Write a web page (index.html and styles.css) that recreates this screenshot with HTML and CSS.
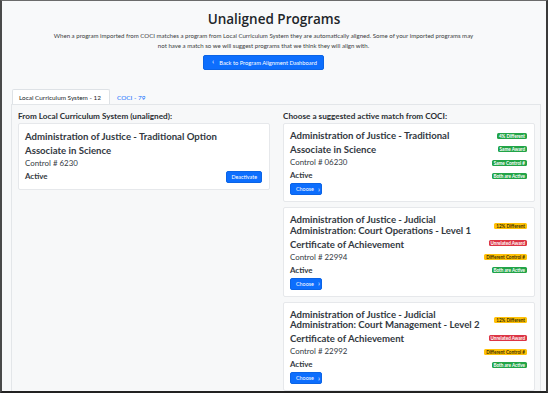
FILE: index.html
```html
<!DOCTYPE html>
<html lang="en">
<head>
<meta charset="utf-8">
<title>Unaligned Programs</title>
<link rel="stylesheet" href="styles.css">
</head>
<body>
<div class="frame">
  <header class="intro">
    <h1 class="page-title">Unaligned Programs</h1>
    <div class="intro-body">
      <p class="lead">When a program imported from COCI matches a program from Local Curriculum System they are automatically aligned. Some of your imported programs may not have a match so we will suggest programs that we think they will align with.</p>
      <a class="btn btn-primary btn-back" href="#"><span class="chev">&#8249;</span>Back to Program Alignment Dashboard</a>
    </div>
  </header>

  <nav class="tabs">
    <a class="tab active" href="#">Local Curriculum System - 12</a>
    <a class="tab" href="#">COCI - 79</a>
  </nav>

  <section class="panel">
    <div class="col">
      <h2 class="col-title">From Local Curriculum System (unaligned):</h2>
      <div class="card card-local">
        <div class="row"><div class="prog-title">Administration of Justice - Traditional Option</div></div>
        <div class="row"><div class="award">Associate in Science</div></div>
        <div class="row"><div class="control">Control # 6230</div></div>
        <div class="row"><div class="status">Active</div><a class="btn btn-primary btn-xs" href="#">Deactivate</a></div>
      </div>
    </div>

    <div class="col">
      <h2 class="col-title">Choose a suggested active match from COCI:</h2>

      <div class="card">
        <div class="row"><div class="prog-title">Administration of Justice - Traditional</div><span class="badge green">4% Different</span></div>
        <div class="row"><div class="award">Associate in Science</div><span class="badge green">Same Award</span></div>
        <div class="row"><div class="control">Control # 06230</div><span class="badge green">Same Control #</span></div>
        <div class="row"><div class="status">Active</div><span class="badge green">Both are Active</span></div>
        <a class="btn btn-primary btn-choose" href="#">Choose<span class="chev-r">&#8250;</span></a>
      </div>

      <div class="card">
        <div class="row"><div class="prog-title">Administration of Justice - Judicial Administration: Court Operations - Level 1</div><span class="badge yellow">12% Different</span></div>
        <div class="row"><div class="award">Certificate of Achievement</div><span class="badge red">Unrelated Award</span></div>
        <div class="row"><div class="control">Control # 22994</div><span class="badge yellow">Different Control #</span></div>
        <div class="row"><div class="status">Active</div><span class="badge green">Both are Active</span></div>
        <a class="btn btn-primary btn-choose" href="#">Choose<span class="chev-r">&#8250;</span></a>
      </div>

      <div class="card">
        <div class="row"><div class="prog-title">Administration of Justice - Judicial Administration: Court Management - Level 2</div><span class="badge yellow">12% Different</span></div>
        <div class="row"><div class="award">Certificate of Achievement</div><span class="badge red">Unrelated Award</span></div>
        <div class="row"><div class="control">Control # 22992</div><span class="badge yellow">Different Control #</span></div>
        <div class="row"><div class="status">Active</div><span class="badge green">Both are Active</span></div>
        <a class="btn btn-primary btn-choose" href="#">Choose<span class="chev-r">&#8250;</span></a>
      </div>
    </div>
  </section>
</div>
</body>
</html>
```
FILE: styles.css
```css
* { box-sizing: border-box; }
html, body { margin: 0; padding: 0; }
body {
  width: 548px;
  height: 393px;
  overflow: hidden;
  font-family: Lato, "Open Sans", "Liberation Sans", sans-serif;
  color: #212529;
  background: #fff;
}
.frame {
  width: 548px;
  height: 393px;
  overflow: hidden;
  background: #f8f9fa;
  border-top: 1px solid #6b6b6b;
  border-left: 2px solid #4a4a4a;
  border-right: 2px solid #3a3a3a;
  border-bottom: 2px solid #222;
  display: flex;
  flex-direction: column;
}
.frame > * { flex-shrink: 0; }
.intro {
  display: flex;
  flex-direction: column;
  align-items: center;
  padding-top: 9px;
}
.page-title {
  margin: 0;
  font-family: "Open Sans", Lato, sans-serif;
  font-size: 13.5px;
  font-weight: 600;
  line-height: 18px;
  color: #212529;
}
.intro-body {
  align-self: stretch;
  display: flex;
  flex-direction: column;
  align-items: center;
  padding-right: 21px;
}
.lead {
  margin: 3px 0 0;
  width: 421px;
  text-align: center;
  font-size: 6.1px;
  line-height: 10px;
  color: #3a3d40;
}
.btn {
  display: inline-flex;
  align-items: center;
  text-decoration: none;
  color: #fff;
  border-radius: 2px;
}
.btn-primary { background: #0d6efd; border: 1px solid #0b64e6; }
.btn-back {
  margin-top: 4px;
  height: 15px;
  padding: 0 6px 0 8px;
  font-size: 5.75px;
}
.chev { font-size: 7.5px; margin-right: 5px; line-height: 1; position: relative; top: -0.5px; }
.tabs {
  display: flex;
  margin: 19px 0 0 10px;
  height: 15px;
}
.tab {
  display: flex;
  align-items: center;
  padding: 0 6px;
  font-size: 6.4px;
  color: #0d6efd;
  text-decoration: none;
  border: 1px solid transparent;
  border-bottom: none;
  border-radius: 2px 2px 0 0;
}
.tab.active {
  background: #fff;
  color: #212529;
  border-color: #dee2e6;
  width: 98px;
}
.panel {
  margin: 0 5px 0 9px;
  border: 1px solid #e3e6e9;
  border-bottom: none;
  background: #f7f8f9;
  flex: 1 0 auto;
  display: grid;
  grid-template-columns: 252px 252px;
  column-gap: 13px;
  padding: 6px 5px 0 6px;
  align-items: start;
}
.col { display: flex; flex-direction: column; gap: 5px; }
.col-title {
  margin: 0 0 -3px;
  font-size: 8.2px;
  font-weight: 700;
  line-height: 10px;
  color: #2b2f33;
}
.card {
  background: #fff;
  border: 1px solid #e6e8eb;
  border-radius: 2px;
  padding: 7px 7px 6px 6px;
  display: flex;
  flex-direction: column;
}
.card-local { padding-top: 8px; padding-bottom: 6px; }
.row {
  display: flex;
  align-items: center;
  justify-content: space-between;
  gap: 6px;
}
.prog-title {
  font-size: 9.6px;
  font-weight: 700;
  line-height: 10.5px;
  color: #33393f;
}
.award {
  font-size: 9.6px;
  font-weight: 700;
  line-height: 11px;
  margin: 2.5px 0 1px;
  color: #33393f;
}
.control {
  font-size: 7.9px;
  line-height: 13px;
  color: #33393f;
}
.status {
  font-size: 7.9px;
  font-weight: 700;
  line-height: 13px;
  color: #33393f;
}
.badge {
  flex: none;
  font-size: 4.6px;
  font-weight: 700;
  line-height: 6px;
  padding: 0 2px;
  border-radius: 1.5px;
  color: #fff;
  white-space: nowrap;
}
.badge.green { background: #22a447; }
.badge.yellow { background: #ffc107; color: #3b2f00; }
.badge.red { background: #dc3545; }
.btn-xs {
  height: 12px;
  padding: 0 4px;
  font-size: 5.4px;
  margin-top: 0;
}
.btn-choose {
  align-self: flex-start;
  height: 12px;
  width: 32px;
  padding: 0 0 0 5px;
  font-size: 5.4px;
  margin-top: 1px;
}
.chev-r { margin-left: 4px; font-size: 7px; line-height: 1; }
```
